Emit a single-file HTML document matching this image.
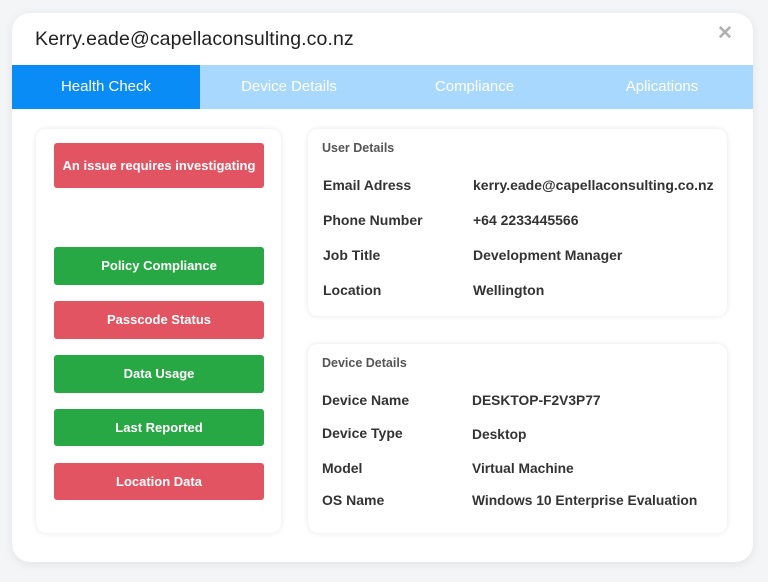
<!DOCTYPE html><html><head><style>
*{margin:0;padding:0;box-sizing:border-box}
body{width:768px;height:582px;background:#f4f5f7;font-family:"Liberation Sans",sans-serif;position:relative;overflow:hidden}
.card{position:absolute;left:12px;top:13px;width:741px;height:549px;background:#fff;border-radius:18px;box-shadow:0 2px 10px rgba(0,0,0,.08);overflow:hidden}
.title{position:absolute;left:23px;top:15px;font-size:19.5px;color:#222;letter-spacing:.1px}
.x{position:absolute;left:705px;top:9px;font-size:19px;color:#b0b0b0;font-weight:bold}
.tabs{position:absolute;left:0;top:52px;width:741px;height:44px;background:#a8d8fd}
.tab{position:absolute;top:0;height:44px;line-height:44px;text-align:center;color:#fff;font-size:15px}
.panel{position:absolute;background:#fff;border-radius:10px;box-shadow:0 0 6px rgba(0,0,0,.1)}
.btn{position:absolute;left:42px;width:210px;color:#fff;font-weight:bold;font-size:13px;text-align:center;border-radius:3px}
.r{background:#e25462}.g{background:#28a745}
.l,.v{position:absolute;font-weight:bold;font-size:14px;color:#333}
.h{position:absolute;font-weight:bold;font-size:12.5px;color:#555}
</style></head><body>
<div class="card">
<div class="title">Kerry.eade@capellaconsulting.co.nz</div>
<div class="x">✕</div>
<div class="tabs">
<div class="tab" style="left:0;width:188px;background:#0a8cf6">Health Check</div>
<div class="tab" style="left:188px;width:178px">Device Details</div>
<div class="tab" style="left:366px;width:193px">Compliance</div>
<div class="tab" style="left:559px;width:182px">Aplications</div>
</div>
<div class="panel" style="left:24px;top:116px;width:245px;height:404px"></div>
<div class="btn r" style="top:130px;height:45px;line-height:45px">An issue requires investigating</div>
<div class="btn g" style="top:234px;height:38px;line-height:38px">Policy Compliance</div>
<div class="btn r" style="top:288px;height:38px;line-height:38px">Passcode Status</div>
<div class="btn g" style="top:342px;height:38px;line-height:38px">Data Usage</div>
<div class="btn g" style="top:396px;height:37px;line-height:37px">Last Reported</div>
<div class="btn r" style="top:450px;height:37px;line-height:37px">Location Data</div>
<div class="panel" style="left:296px;top:116px;width:419px;height:187px"></div>
<div class="h" style="left:310px;top:128px">User Details</div>
<div class="l" style="left:311px;top:164px">Email Adress</div><div class="v" style="left:461px;top:164px">kerry.eade@capellaconsulting.co.nz</div>
<div class="l" style="left:311px;top:199px">Phone Number</div><div class="v" style="left:461px;top:199px">+64 2233445566</div>
<div class="l" style="left:311px;top:234px">Job Title</div><div class="v" style="left:461px;top:234px">Development Manager</div>
<div class="l" style="left:311px;top:269px">Location</div><div class="v" style="left:461px;top:269px">Wellington</div>
<div class="panel" style="left:296px;top:331px;width:419px;height:189px"></div>
<div class="h" style="left:310px;top:343px">Device Details</div>
<div class="l" style="left:310px;top:379px">Device Name</div><div class="v" style="left:460px;top:380px;font-size:13.8px">DESKTOP-F2V3P77</div>
<div class="l" style="left:310px;top:412px">Device Type</div><div class="v" style="left:460px;top:414px;font-size:13.8px">Desktop</div>
<div class="l" style="left:310px;top:447px">Model</div><div class="v" style="left:460px;top:448px;font-size:13.8px">Virtual Machine</div>
<div class="l" style="left:310px;top:479px">OS Name</div><div class="v" style="left:460px;top:480px;font-size:13.8px">Windows 10 Enterprise Evaluation</div>
</div>
</body></html>
